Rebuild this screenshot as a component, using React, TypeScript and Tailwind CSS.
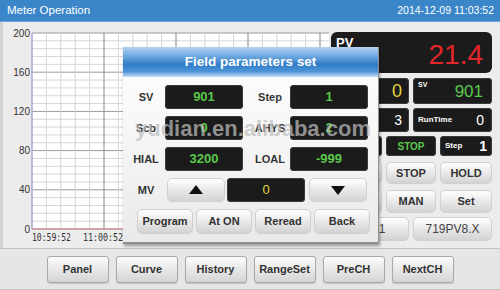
import React from 'react'

const box = 'rounded-[4px] bg-[#1b1b1b] shadow-[inset_0_0_0_1px_#3a3a3a]'
const grayBtn =
  'flex items-center justify-center rounded-[5px] border border-[#cfcfcf] bg-[linear-gradient(to_bottom,#ffffff,#e6e6e6_55%,#d3d3d3)] text-[11px] font-bold text-[#333]'

function Chart() {
  const left = 29
  const right = 326
  const top = 11
  const bottom = 207
  const vx = Array.from({ length: 21 }, (_, k) => left + 14.4 * k).filter((x) => x <= right)
  const hy = Array.from({ length: 26 }, (_, j) => top + 7.84 * j)
  const labels = ['200', '160', '120', '80', '40', '0']
  return (
    <svg width={331} height={227} className="block">
      <rect x={left} y={top} width={right - left} height={bottom - top} fill="#ffffff" />
      {hy.map((y, j) => (
        <line
          key={'h' + j}
          x1={left}
          x2={right}
          y1={y}
          y2={y}
          stroke={j % 5 === 0 ? '#9a9a9a' : '#d6d6d6'}
          strokeWidth={1}
        />
      ))}
      {vx.map((x, k) => (
        <line
          key={'v' + k}
          x1={x}
          x2={x}
          y1={top}
          y2={bottom}
          stroke={k % 5 === 0 && k > 0 ? '#8a8a8a' : '#d6d6d6'}
          strokeWidth={1}
        />
      ))}
      <line x1={left} x2={left} y1={top} y2={bottom} stroke="#9b8fcf" />
      <line x1={left} x2={right} y1={bottom} y2={bottom} stroke="#d97a86" />
      {labels.map((l, i) => (
        <text
          key={l}
          x={27}
          y={top + 39.2 * i + 3.5}
          textAnchor="end"
          fontSize={10}
          fontFamily="'Liberation Sans', Arial, sans-serif"
          fill="#333"
        >
          {l}
        </text>
      ))}
      <text x={29} y={219} fontSize={10} textLength={39} lengthAdjust="spacingAndGlyphs" fontFamily="'DejaVu Sans Mono', monospace" fill="#333">
        10:59:52
      </text>
      <text x={80} y={219} fontSize={10} textLength={40} lengthAdjust="spacingAndGlyphs" fontFamily="'DejaVu Sans Mono', monospace" fill="#333">
        11:00:52
      </text>
    </svg>
  )
}

function Tri({ down }: { down?: boolean }) {
  return (
    <svg width="16" height="10" viewBox="0 0 16 10">
      <polygon points={down ? '1,1 15,1 8,10' : '8,0 15,9 1,9'} fill="#111" />
    </svg>
  )
}

function FieldDialog() {
  const label = 'text-[11px] font-bold text-[#333] text-center'
  const val = `${box} flex items-center justify-center text-[13px] font-bold text-[#5ac84c]`
  const rows: [string, string, string, string][] = [
    ['SV', '901', 'Step', '1'],
    ['Scb', '0', 'AHYS', '2'],
    ['HIAL', '3200', 'LOAL', '-999'],
  ]
  return (
    <div className="absolute left-[123px] top-[47px] flex h-[197px] w-[256px] flex-col overflow-hidden border-b-2 border-r border-[#8f8f8f] bg-[linear-gradient(to_bottom,#ffffff,#f3f3f3_60%,#e9e9e9)] shadow-[1px_2px_3px_rgba(0,0,0,0.35)]">
      <div className="flex h-[30px] shrink-0 items-center justify-center bg-[linear-gradient(to_bottom,#b3d3f1_0%,#6ea9e0_30%,#2f7cc7_58%,#4f95d8_82%,#c9e0f5_100%)] text-[13.5px] font-bold text-white">
        Field parameters set
      </div>
      <div className="flex flex-col gap-[7px] pl-[4px] pt-[8px]">
        {rows.map(([a, av, b, bv]) => (
          <div key={a} className="flex h-[24px] items-center">
            <span className={`${label} w-[38px]`}>{a}</span>
            <span className={`${val} h-full w-[78px]`}>{av}</span>
            <span className={`${label} w-[47px] pl-[7px]`}>{b}</span>
            <span className={`${val} h-full w-[78px]`}>{bv}</span>
          </div>
        ))}
        <div className="flex h-[24px] items-center">
          <span className={`${label} w-[38px]`}>MV</span>
          <button className={`${grayBtn} ml-[2px] h-full w-[58px]`}>
            <Tri />
          </button>
          <span className={`${box} ml-[2px] flex h-full w-[78px] items-center justify-center text-[13px] text-[#e4d545]`}>
            0
          </span>
          <button className={`${grayBtn} ml-[4px] h-full w-[58px]`}>
            <Tri down />
          </button>
        </div>
        <div className="flex h-[25px] gap-[3px] pl-[10px]">
          {['Program', 'At ON', 'Reread', 'Back'].map((t) => (
            <button key={t} className={`${grayBtn} h-full w-[56px] text-[11.5px]`}>
              {t}
            </button>
          ))}
        </div>
      </div>
    </div>
  )
}

function RightPanel() {
  return (
    <div className="flex w-[161px] flex-col pt-[10px]">
      <div className="relative h-[41px] rounded-[6px] bg-[#1b1b1b]">
        <span className="absolute left-[5px] top-[1px] text-[13px] font-bold text-white">PV</span>
        <span className="absolute right-[9px] top-[9px] text-[28px] leading-none text-[#e3262a]">21.4</span>
      </div>
      <div className="mt-[5px] flex h-[26px] gap-[4px]">
        <div className={`${box} flex w-[78px] items-center justify-end pr-[7px] text-[18px] leading-none text-[#e6d43c]`}>0</div>
        <div className={`${box} relative flex flex-1 items-center justify-end pr-[9px] text-[17px] leading-none text-[#5ac84c]`}>
          <span className="absolute left-[5px] top-[3px] text-[7px] font-bold text-white">SV</span>
          901
        </div>
      </div>
      <div className="mt-[4px] flex h-[24px] gap-[4px]">
        <div className={`${box} flex w-[78px] items-center justify-end pr-[7px] text-[14px] text-white`}>3</div>
        <div className={`${box} flex flex-1 items-center justify-between pl-[5px] pr-[8px] text-white`}>
          <span className="text-[8px] font-bold">RunTime</span>
          <span className="text-[14px]">0</span>
        </div>
      </div>
      <div className="mt-[4px] flex h-[20px] gap-[4px]">
        <div className={`${box} flex w-[51px] items-center justify-center text-[10px] font-bold text-[#5ac84c]`}>AUTO</div>
        <div className={`${box} flex w-[50px] items-center justify-center text-[10px] font-bold text-[#5ac84c]`}>STOP</div>
        <div className={`${box} flex flex-1 items-center justify-between pl-[5px] pr-[5px] text-white`}>
          <span className="text-[8px] font-bold">Step</span>
          <span className="text-[14px] font-bold">1</span>
        </div>
      </div>
      <div className="mt-[6px] flex h-[22px] gap-[4px]">
        <button className={`${grayBtn} w-[51px] text-[10.5px]`}>RUN</button>
        <button className={`${grayBtn} w-[50px] text-[10.5px]`}>STOP</button>
        <button className={`${grayBtn} flex-1 text-[10.5px]`}>HOLD</button>
      </div>
      <div className="mt-[6px] flex h-[23px] gap-[4px]">
        <button className={`${grayBtn} w-[51px] text-[10.5px]`}>AUTO</button>
        <button className={`${grayBtn} w-[50px] text-[10.5px]`}>MAN</button>
        <button className={`${grayBtn} flex-1 text-[10.5px]`}>Set</button>
      </div>
      <div className="mt-[4px] flex h-[24px] gap-[4px]">
        <button className={`${grayBtn} w-[78px] !font-normal text-[12px] text-[#444]`}>CH01</button>
        <button className={`${grayBtn} flex-1 !font-normal text-[12px] text-[#444]`}>719PV8.X</button>
      </div>
    </div>
  )
}

export default function App() {
  const navs = ['Panel', 'Curve', 'History', 'RangeSet', 'PreCH', 'NextCH']
  return (
    <div className="relative h-[290px] w-[500px] overflow-hidden bg-[#ececec] font-['Liberation_Sans',Arial,sans-serif]">
      <header className="flex h-[22px] items-center justify-between border-b border-[#6aa3d6] bg-[#3b86c8] pl-[7px] pr-[6px] text-white">
        <span className="text-[11.5px]">Meter Operation</span>
        <span className="text-[10.5px]">2014-12-09 11:03:52</span>
      </header>

      <main className="flex h-[226px] border-l-[3px] border-[#d2d2d2]">
        <div className="w-[328px]">
          <Chart />
        </div>
        <RightPanel />
      </main>

      <footer className="flex h-[42px] items-center justify-center gap-[7px] border-y border-[#c4c4c4] bg-[#e6e6e6]">
        {navs.map((n) => (
          <button
            key={n}
            className="flex h-[27px] w-[62px] items-center justify-center rounded-[3px] border border-[#a9a9a9] bg-[linear-gradient(to_bottom,#fcfcfc,#e8e8e8_50%,#d4d4d4)] text-[11px] font-bold text-[#333] shadow-[0_1px_1px_rgba(0,0,0,0.15)]"
          >
            {n}
          </button>
        ))}
      </footer>

      <FieldDialog />

      <div className="pointer-events-none absolute left-[135px] top-[118px] text-[22px] font-bold leading-none text-[rgba(190,190,190,0.72)]">
        yudian.en.alibaba.com
      </div>
    </div>
  )
}
